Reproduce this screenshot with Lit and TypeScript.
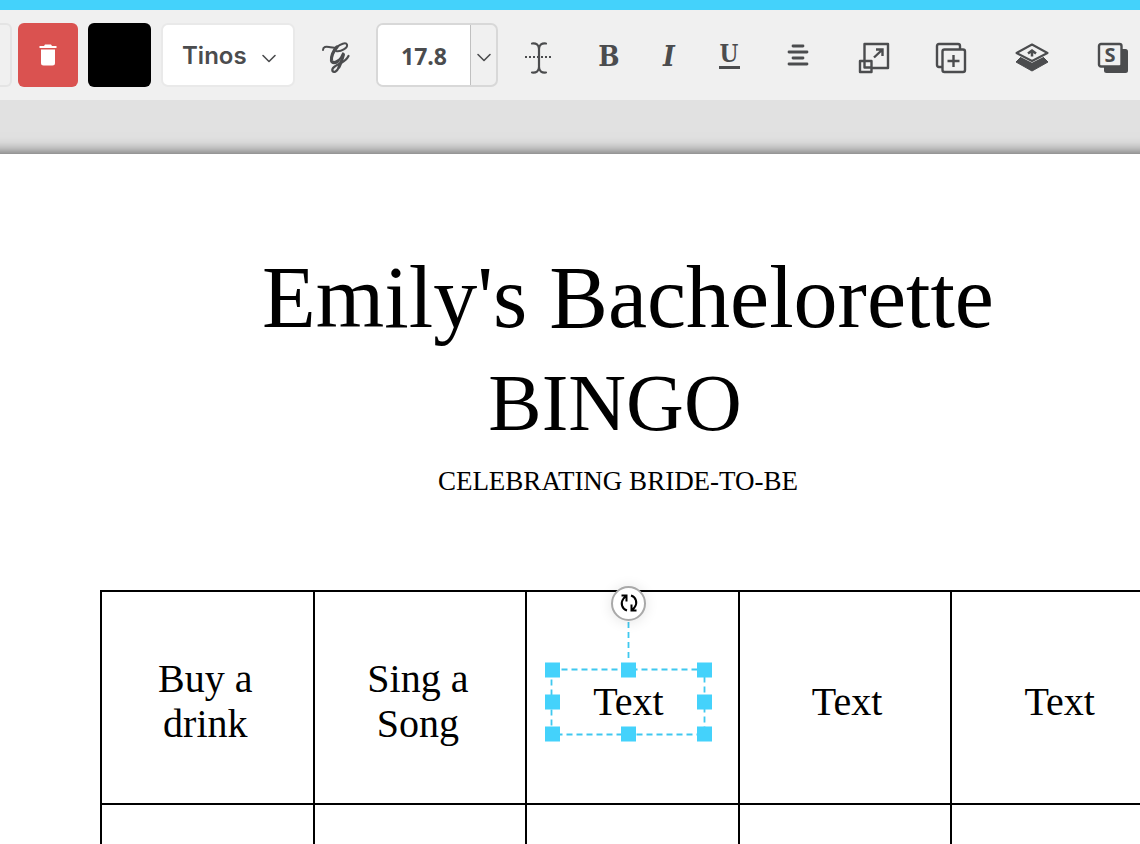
import { LitElement, html, css, svg } from "lit";
import { customElement, state } from "lit/decorators.js";

const chevron = svg`<path d="M1 1.5 L7 7.5 L13 1.5" fill="none" stroke="currentColor" stroke-width="1.6" stroke-linecap="round" stroke-linejoin="round"/>`;

@customElement("editor-toolbar")
class EditorToolbar extends LitElement {
  static styles = css`
    :host {
      display: block;
      border-top: 10px solid #44d2fb;
      background: #f0f0f0;
      color: #4b4c4e;
      overflow: hidden;
    }
    .bar {
      display: flex;
      align-items: center;
      height: 90px;
    }
    button {
      margin: 0;
      padding: 0;
      border: 0;
      background: none;
      color: inherit;
      display: flex;
      align-items: center;
      justify-content: center;
      flex: none;
      box-sizing: border-box;
      height: 64px;
    }
    svg {
      display: block;
      overflow: visible;
    }
    .edge {
      width: 12px;
      border: 2px solid #e4e4e4;
      border-left: 0;
      border-radius: 0 6px 6px 0;
      margin-right: 6px;
    }
    .delete {
      width: 60px;
      border-radius: 6px;
      background: #da5250;
      margin-right: 10px;
    }
    .swatch {
      width: 63px;
      border-radius: 6px;
      background: #000;
      margin-right: 10px;
    }
    .font {
      display: grid;
      align-items: center;
      flex: none;
      width: 134px;
      height: 64px;
    }
    .font > * {
      grid-area: 1 / 1;
    }
    .font svg {
      justify-self: end;
      margin-right: 19px;
      margin-top: 6px;
      pointer-events: none;
    }
    select {
      appearance: none;
      box-sizing: border-box;
      width: 100%;
      height: 64px;
      margin: 0;
      padding: 2px 0 0 19px;
      border: 2px solid #e9e9e9;
      border-radius: 7px;
      background: #fff;
      color: #4b4c4e;
      font: 600 24px/32px Inter, sans-serif;
    }
    .size {
      display: flex;
      flex: none;
      box-sizing: border-box;
      width: 122px;
      height: 64px;
      border: 2px solid #d8d8d8;
      border-radius: 7px;
      overflow: hidden;
    }
    .size input {
      flex: 1;
      min-width: 0;
      margin: 0;
      padding: 2px 0 0;
      border: 0;
      border-right: 1px solid #c0c0c0;
      background: #fff;
      color: #4b4c4e;
      text-align: center;
      font: 700 23px/32px "Open Sans", sans-serif;
    }
    .size button {
      width: 25px;
      height: 60px;
      padding-top: 4px;
    }
    .wide {
      width: 81px;
    }
    .low {
      padding-top: 6px;
    }
    .mark {
      width: 60px;
      padding-top: 4px;
      font: 700 28px/32px "DejaVu Serif Condensed", "DejaVu Serif", serif;
    }
    .italic {
      font-style: italic;
    }
    .line {
      box-sizing: border-box;
      width: 21px;
      height: 24px;
      border-bottom: 3px solid currentColor;
      display: flex;
      justify-content: center;
      font-size: 24px;
      line-height: 18px;
    }
    .s {
      font: 700 20px "Open Sans", sans-serif;
    }
    .align {
      width: 78px;
    }
    .step {
      width: 73px;
    }
  `;

  render() {
    return html`
      <div class="bar" role="toolbar" aria-label="Text tools">
        <button class="edge" aria-label="Previous tool"></button>
        <button class="delete" aria-label="Delete">
          <svg width="18" height="22" viewBox="0 0 18 22" fill="#fff">
            <path d="M0.500 2H5L6 0.500H12L13 2H17.500V4H0.500ZM2 5.500H16V19Q16 21.500 13.500 21.500H4.500Q2 21.500 2 19Z" />
          </svg>
        </button>
        <button class="swatch" aria-label="Text colour"></button>
        <div class="font">
          <select aria-label="Font family"><option>Tinos</option></select>
          <svg width="14" height="9" viewBox="0 0 14 9">${chevron}</svg>
        </div>
        <button class="wide low" aria-label="Font style">
          <svg width="28" height="32" viewBox="0 0 28 32" fill="none" stroke="currentColor" stroke-linecap="round" stroke-linejoin="round">
            <path stroke-width="2" d="M1 8C1 4.500 4 4.500 7 5C10 5.500 12 6 14 5.500" />
            <path stroke-width="2" d="M14 9C19 10 26 6 25 2.500C24 0 18 2 15 5" />
            <path stroke-width="3.200" d="M15 5C11 9 9 15 9.500 18.500C10 21.500 14 21 16 19" />
            <path stroke-width="2.200" d="M16 19C18.500 16.500 20 14.500 21 11.500" />
            <path stroke-width="3" d="M21.500 12.500C20.500 16 19 21 17 25" />
            <path stroke-width="2.200" d="M17 25C15 29.500 12 31 10.500 29C9 25.500 15 23 19 21C22.500 19 25 17 26.500 14" />
          </svg>
        </button>
        <div class="size">
          <input aria-label="Font size" value="17.8" />
          <button aria-label="Choose a font size">
            <svg width="14" height="9" viewBox="0 0 14 9">${chevron}</svg>
          </button>
        </div>
        <button class="wide low" aria-label="Line spacing">
          <svg width="28" height="32" viewBox="0 0 28 32" fill="none" stroke="currentColor" stroke-width="2.200" stroke-linecap="round">
            <path d="M7 1.500C11 1 14 2.500 14 7V25C14 29.500 11 31 7 30.500M21 1.500C17 1 14 2.500 14 7M14 25C14 29.500 17 31 21 30.500" />
            <path stroke-linecap="butt" stroke-dasharray="2 2" d="M0 15H28" />
          </svg>
        </button>
        <button class="mark" aria-label="Bold">B</button>
        <button class="mark italic" aria-label="Italic">I</button>
        <button class="mark" aria-label="Underline"><span class="line">U</span></button>
        <button class="align" aria-label="Align centre">
          <svg width="22" height="22" viewBox="0 0 22 22" stroke="currentColor" stroke-width="2.800" stroke-linecap="round">
            <path d="M6 2H16M2 8H20M6 14H16M2 20H20" />
          </svg>
        </button>
        <button class="step low" aria-label="Resize">
          <svg width="30" height="30" viewBox="0 0 30 30" fill="none" stroke="currentColor" stroke-width="2.400" stroke-linejoin="round">
            <path d="M5.500 18V1H29V25H12.500M1 18H12.500V29H1ZM5.500 18V24.500H12.500" />
            <path stroke-linejoin="miter" d="M15 14.500L23.500 6.500M17 6.500H23.500V13" />
          </svg>
        </button>
        <button class="wide low" aria-label="Duplicate">
          <svg width="30" height="30" viewBox="0 0 30 30" fill="none" stroke="currentColor" stroke-width="2.400">
            <path d="M6.500 24H3Q1 24 1 22V3Q1 1 3 1H22Q24 1 24 3V6.500" />
            <rect x="6.500" y="6.500" width="22.500" height="22.500" rx="2" />
            <path d="M17.500 12V24M11.500 18H23.500" />
          </svg>
        </button>
        <button class="wide low" aria-label="Bring forward">
          <svg width="34" height="28" viewBox="0 0 34 28">
            <path fill="currentColor" stroke="currentColor" stroke-linejoin="round" d="M1 18L6 13H28L33 18L17 27Z" />
            <path fill="#f0f0f0" stroke="#f0f0f0" stroke-width="4" d="M1 8.500L17 0L33 8.500L17 16.500Z" />
            <path fill="#f0f0f0" stroke="currentColor" stroke-width="2" stroke-linejoin="round" d="M1.500 9L17 0.500L32.500 9L17 17Z" />
            <path fill="none" stroke="currentColor" stroke-width="2.500" d="M17 12.500V7M13 9.500L17 6.500L21 9.500" />
          </svg>
        </button>
        <button class="wide low" aria-label="Shadow">
          <svg width="30" height="30" viewBox="0 0 30 30">
            <rect x="6" y="6" width="24" height="24" rx="2.500" fill="currentColor" />
            <rect x="1" y="1" width="22.500" height="22.500" rx="2" fill="#f0f0f0" stroke="currentColor" stroke-width="2.400" />
            <text class="s" x="12" y="19" text-anchor="middle" fill="currentColor">S</text>
          </svg>
        </button>
      </div>
    `;
  }
}

@customElement("selection-frame")
class SelectionFrame extends LitElement {
  static styles = css`
    :host {
      display: block;
      position: absolute;
      inset: 0;
    }
    svg {
      display: block;
      overflow: visible;
    }
    .turn {
      position: absolute;
      left: 50%;
      bottom: 100%;
      margin: 0 0 49px -17px;
      width: 35px;
      height: 35px;
      padding: 0;
      border: 2px solid #a9a9a9;
      border-radius: 50%;
      background: #fff;
      color: #000;
      display: grid;
      place-items: center;
      box-shadow: 0 1px 14px #0000001c;
    }
  `;
  render() {
    const handles = [0, 76, 152].flatMap((x) => [0, 32, 64].map((y) => ({ x, y })));
    return html`
      <svg width="152" height="64" viewBox="0 0 152 64">
        <path d="M76.500 -48V-8" stroke="#3fc8ef" stroke-width="1.800" stroke-dasharray="6 4" />
        <path d="M-0.500 -0.500H152.500V64.500H-0.500Z" fill="none" stroke="#3fc8ef" stroke-width="1.800" stroke-dasharray="6 4" />
        ${handles
          .filter((h) => h.x !== 76 || h.y !== 32)
          .map((h) => svg`<rect x=${h.x - 7} y=${h.y - 7.5} width="15" height="15" fill="#44d2fb"/>`)}
      </svg>
      <button class="turn" aria-label="Rotate">
        <svg width="18" height="18" viewBox="0 0 18 18" fill="none" stroke="currentColor" stroke-width="2">
          <path d="M7 16.500C2 15 0 9 3.500 4.500L6.500 1.500M1.500 1.500H6.500V7.500" />
          <path d="M11 1.500C16 3 18 9 14.500 13.500L11.500 16.500M16.500 16.500H11.500V10.500" />
        </svg>
      </button>
    `;
  }
}

@customElement("app-root")
class AppRoot extends LitElement {
  static styles = css`
    :host {
      display: flex;
      flex-direction: column;
      height: 100vh;
      overflow: hidden;
      background: #e1e1e1;
    }
    .stage {
      flex: 1;
      min-height: 0;
      overflow: hidden;
      padding-top: 54px;
    }
    .sheet {
      min-height: 100%;
      box-sizing: border-box;
      margin: 0 -24px;
      padding: 94px 24px 0;
      background: #fff;
      box-shadow: 0 0 14px 1px #000000a0;
      color: #000;
      text-align: center;
      font-family: "Liberation Serif", Tinos, serif;
    }
    h1,
    h2,
    p {
      margin: 0;
      font-weight: 400;
      white-space: nowrap;
    }
    h1 {
      padding-left: 116px;
      font-size: 88px;
      line-height: 100px;
    }
    h2 {
      padding-left: 90px;
      margin-top: 7px;
      font-size: 80px;
      line-height: 96px;
    }
    p {
      padding-left: 96px;
      margin-top: 14px;
      font-size: 27px;
      line-height: 32px;
    }
    table {
      width: calc(100% - 75px);
      margin: 93px 0 0 100px;
      border-collapse: collapse;
      table-layout: fixed;
      font-size: 40px;
      line-height: 45px;
    }
    td {
      box-sizing: border-box;
      height: 213px;
      padding: 16px 32px 8px 36px;
      border: 2px solid #000;
      vertical-align: middle;
    }
    td.filled {
      padding: 14px 38px 8px 34px;
    }
    td.chosen {
      padding: 16px 40px 8px 32px;
    }
    .box {
      position: relative;
      display: inline-block;
      width: 152px;
      padding: 10px 0;
      margin: 0 -20px;
      box-sizing: border-box;
      line-height: 44px;
      vertical-align: middle;
    }
  `;

  @state() rows = [
    ["Buy a drink", "Sing a Song", "Text", "Text", "Text"],
    ["", "", "", "", ""],
  ];

  @state() selected = 2;

  renderCell(text: string, row: number, col: number) {
    if (row === 0 && col === this.selected) {
      return html`<td class="chosen"><span class="box">${text}<selection-frame></selection-frame></span></td>`;
    }
    return html`<td class=${text && text !== "Text" ? "filled" : "plain"}>${text}</td>`;
  }

  render() {
    return html`
      <editor-toolbar></editor-toolbar>
      <main class="stage">
        <article class="sheet">
          <h1>Emily's Bachelorette</h1>
          <h2>BINGO</h2>
          <p>CELEBRATING BRIDE-TO-BE</p>
          <table>
            <tbody>
              ${this.rows.map((row, r) => html`<tr>${row.map((cell, c) => this.renderCell(cell, r, c))}</tr>`)}
            </tbody>
          </table>
        </article>
      </main>
    `;
  }
}
